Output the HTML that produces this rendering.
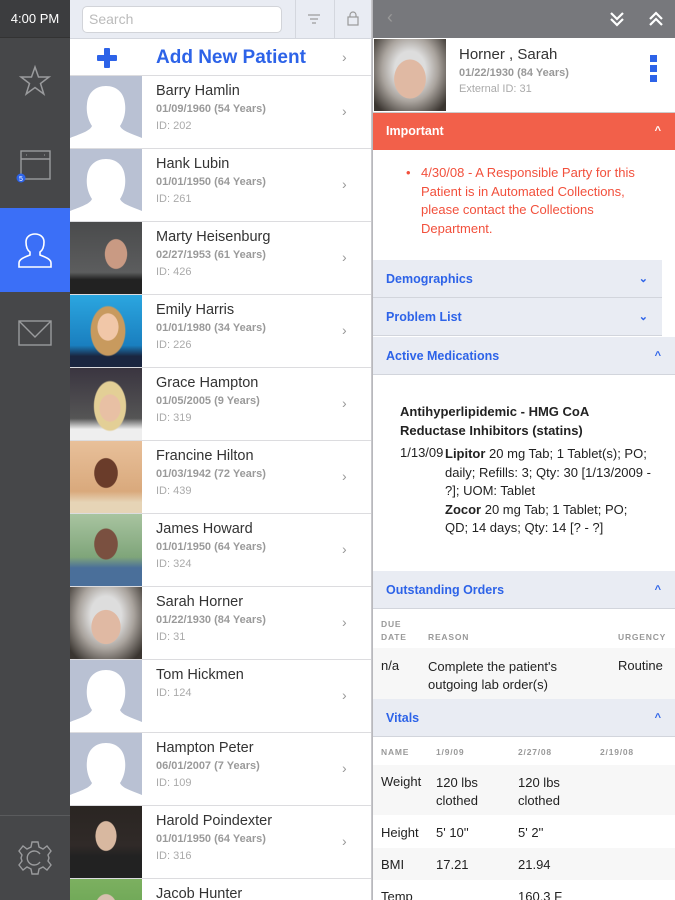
<!DOCTYPE html>
<html><head><meta charset="utf-8"><style>
*{margin:0;padding:0;box-sizing:border-box}
html,body{width:675px;height:900px;overflow:hidden}
body{font-family:"Liberation Sans",sans-serif;background:#fff}
#wrap{position:relative;width:675px;height:900px;overflow:hidden}
.abs{position:absolute}
#side{left:0;top:0;width:70px;height:900px;background:#464749}
#time{left:0;top:0;width:70px;height:38px;background:#3c3d3f;color:#fff;font-size:13px;line-height:38px;text-align:center;border-bottom:1px solid #333}
#list{left:70px;top:0;width:302px;height:900px;background:#fff;border-right:1px solid #c8c8cc;overflow:hidden}
#lhead{left:0;top:0;width:302px;height:39px;background:#e9ecf3;border-bottom:1px solid #d4d7de}
.search{left:12px;top:6px;width:200px;height:27px;background:#fff;border:1px solid #d2d4d9;border-radius:5px;color:#bbb;font-size:14px;line-height:25px;padding-left:6px}
.row{position:absolute;left:0;width:302px;height:73px;border-bottom:1px solid #dcdcdf}
.ph{position:absolute;left:0;top:0;width:72px;height:72px;overflow:hidden}
.nm{position:absolute;left:86px;top:7px;font-size:14.5px;color:#333}
.dt{position:absolute;left:86px;top:27px;font-size:11px;font-weight:bold;color:#9a9a9a}
.id{position:absolute;left:86px;top:44px;font-size:11px;color:#aaa}
.chev{position:absolute;left:272px;top:27px;font-size:14px;color:#999}
#right{left:373px;top:0;width:302px;height:900px;overflow:hidden}
#rtop{left:0;top:0;width:302px;height:38px;background:#77787c}
.sec{position:absolute;left:0;width:302px;height:38px;background:#e9ecf3;border-bottom:1px solid #d2d5dc;color:#2d63e8;font-weight:bold;font-size:12.5px;line-height:38px;padding-left:13px}
.sec .c{position:absolute;right:14px;top:0;font-size:11px;color:#2d63e8}
.cell{position:absolute;font-size:13px;color:#222}
.hd{position:absolute;font-size:8.5px;font-weight:bold;color:#999;letter-spacing:.8px}
</style></head><body><div id="wrap">
<div id="side" class="abs">
 <div id="time" class="abs">4:00 PM</div>
 <svg class="abs" style="left:18px;top:64px" width="34" height="34" viewBox="0 0 34 34"><path d="M17 3 L20.5 13 L31 13 L22.5 19.5 L25.8 30 L17 23.5 L8.2 30 L11.5 19.5 L3 13 L13.5 13 Z" fill="none" stroke="#9a9b9d" stroke-width="1.5"/></svg>
 <svg class="abs" style="left:15px;top:148px" width="40" height="36" viewBox="0 0 40 36"><rect x="6" y="3" width="29" height="28" fill="none" stroke="#9a9b9d" stroke-width="1.4"/><line x1="6" y1="11" x2="35" y2="11" stroke="#9a9b9d" stroke-width="1.4"/><line x1="11" y1="7" x2="12" y2="7" stroke="#9a9b9d"/><line x1="29" y1="7" x2="30" y2="7" stroke="#9a9b9d"/><circle cx="6" cy="30" r="4.5" fill="#2d63e8"/><text x="6" y="33" font-size="7" fill="#fff" text-anchor="middle" font-family="Liberation Sans">5</text></svg>
 <div class="abs" style="left:0;top:208px;width:70px;height:84px;background:#3b6ff7"></div>
 <svg class="abs" style="left:16px;top:231px" width="38" height="38" viewBox="0 0 38 38"><path d="M3 36 L3 32 C3 28 9 26 14 24 L14 21 C11 19 10 15 10 11 C10 6 14 3 19 3 C24 3 28 6 28 11 C28 15 27 19 24 21 L24 24 C29 26 35 28 35 32 L35 36 Z" fill="none" stroke="#fff" stroke-width="1.6"/></svg>
 <svg class="abs" style="left:18px;top:320px" width="34" height="26" viewBox="0 0 34 26"><rect x="1" y="1" width="32" height="24" fill="none" stroke="#9a9b9d" stroke-width="1.4"/><path d="M1 1 L17 17 L33 1" fill="none" stroke="#9a9b9d" stroke-width="1.4"/></svg>
 <div class="abs" style="left:0;top:815px;width:70px;height:1px;background:#5a5b5d"></div>
 <svg class="abs" style="left:17px;top:840px" width="36" height="36" viewBox="0 0 36 36"><g fill="none" stroke="#9a9b9d" stroke-width="1.4"><path d="M15 2 L21 2 L22 7 L26 9 L30 6 L34 11 L31 15 L32 18 L31 21 L34 25 L30 30 L26 27 L22 29 L21 34 L15 34 L14 29 L10 27 L6 30 L2 25 L5 21 L4 18 L5 15 L2 11 L6 6 L10 9 L14 7 Z"/><path d="M23 14 A7 7 0 1 0 23 22"/></g></svg>
</div>

<div id="list" class="abs">
 <div id="lhead" class="abs">
  <div class="search abs">Search</div>
  <div class="abs" style="left:225px;top:0;width:1px;height:39px;background:#d4d7de"></div>
  <div class="abs" style="left:264px;top:0;width:1px;height:39px;background:#d4d7de"></div>
  <svg class="abs" style="left:237px;top:13px" width="14" height="12"><g stroke="#999" stroke-width="1.2"><line x1="1" y1="2" x2="13" y2="2"/><line x1="3" y1="6" x2="11" y2="6"/><line x1="5" y1="10" x2="9" y2="10"/></g></svg>
  <svg class="abs" style="left:277px;top:11px" width="12" height="15"><rect x="1" y="6" width="10" height="8" fill="none" stroke="#999" stroke-width="1.2"/><path d="M3 6 V4 A3 3 0 0 1 9 4 V6" fill="none" stroke="#999" stroke-width="1.2"/></svg>
 </div>
 <div class="row" style="top:39px;height:37px">
  <div class="abs" style="left:27px;top:9px;width:20px;height:20px"><div class="abs" style="left:7px;top:0;width:6px;height:20px;background:#2d63e8;border-radius:1px"></div><div class="abs" style="left:0;top:7px;width:20px;height:6px;background:#2d63e8;border-radius:1px"></div></div>
  <div class="abs" style="left:86px;top:8px;font-size:19px;font-weight:bold;color:#2d63e8">Add New Patient</div>
  <div class="chev" style="top:10px">›</div>
 </div>
 <div class="abs" style="left:0;top:76px">
 <div class="row" style="top:0"><div class="ph" style="background:#b9c1d3"><svg width="72" height="72"><path d="M0 72 L0 62 C10 58 20 55 22 50 C18 44 16 36 17 28 C18 16 26 10 36 10 C46 10 54 16 55 28 C56 36 54 44 50 50 C52 55 62 58 72 62 L72 72 Z" fill="#fff"/></svg></div><div class="nm">Barry Hamlin</div><div class="dt">01/09/1960 (54 Years)</div><div class="id">ID: 202</div><div class="chev">›</div></div>
 <div class="row" style="top:73px"><div class="ph" style="background:#b9c1d3"><svg width="72" height="72"><path d="M0 72 L0 62 C10 58 20 55 22 50 C18 44 16 36 17 28 C18 16 26 10 36 10 C46 10 54 16 55 28 C56 36 54 44 50 50 C52 55 62 58 72 62 L72 72 Z" fill="#fff"/></svg></div><div class="nm">Hank Lubin</div><div class="dt">01/01/1950 (64 Years)</div><div class="id">ID: 261</div><div class="chev">›</div></div>
 <div class="row" style="top:146px"><div class="ph" style="background:radial-gradient(ellipse 18px 24px at 46px 32px,#c99a83 60%,transparent 64%),linear-gradient(180deg,#4a4b4c 0,#5c5d5e 70%,#222 80%)"></div><div class="nm">Marty Heisenburg</div><div class="dt">02/27/1953 (61 Years)</div><div class="id">ID: 426</div><div class="chev">›</div></div>
 <div class="row" style="top:219px"><div class="ph" style="background:radial-gradient(ellipse 17px 22px at 38px 32px,#f1c7a8 60%,transparent 64%),radial-gradient(ellipse 28px 40px at 38px 36px,#c89a5e 60%,transparent 64%),linear-gradient(180deg,#2ba6e0,#1a7fbf 70%,#1a2640 85%)"></div><div class="nm">Emily Harris</div><div class="dt">01/01/1980 (34 Years)</div><div class="id">ID: 226</div><div class="chev">›</div></div>
 <div class="row" style="top:292px"><div class="ph" style="background:radial-gradient(ellipse 17px 22px at 40px 40px,#e8c0a4 60%,transparent 64%),radial-gradient(ellipse 26px 40px at 40px 38px,#e3cf96 60%,transparent 64%),linear-gradient(180deg,#3a3540,#555 70%,#eee 85%)"></div><div class="nm">Grace Hampton</div><div class="dt">01/05/2005 (9 Years)</div><div class="id">ID: 319</div><div class="chev">›</div></div>
 <div class="row" style="top:365px"><div class="ph" style="background:radial-gradient(ellipse 19px 24px at 36px 32px,#6a3c2a 60%,transparent 64%),linear-gradient(180deg,#e8c09a,#d9a97c 70%,#e6d4b6 85%)"></div><div class="nm">Francine Hilton</div><div class="dt">01/03/1942 (72 Years)</div><div class="id">ID: 439</div><div class="chev">›</div></div>
 <div class="row" style="top:438px"><div class="ph" style="background:radial-gradient(ellipse 19px 25px at 36px 30px,#7a5040 60%,transparent 64%),linear-gradient(180deg,#a8c4a0,#7fa57a 60%,#4a6f9a 75%)"></div><div class="nm">James Howard</div><div class="dt">01/01/1950 (64 Years)</div><div class="id">ID: 324</div><div class="chev">›</div></div>
 <div class="row" style="top:511px"><div class="ph" style="background:radial-gradient(ellipse 24px 28px at 36px 40px,#e0b9a3 60%,transparent 62%),radial-gradient(ellipse at 36px 28px,#ddd 30%,#a9a39d 55%,#3a3530 90%)"></div><div class="nm">Sarah Horner</div><div class="dt">01/22/1930 (84 Years)</div><div class="id">ID: 31</div><div class="chev">›</div></div>
 <div class="row" style="top:584px"><div class="ph" style="background:#b9c1d3"><svg width="72" height="72"><path d="M0 72 L0 62 C10 58 20 55 22 50 C18 44 16 36 17 28 C18 16 26 10 36 10 C46 10 54 16 55 28 C56 36 54 44 50 50 C52 55 62 58 72 62 L72 72 Z" fill="#fff"/></svg></div><div class="nm">Tom Hickmen</div><div class="dt" style="font-weight:normal;color:#aaa">ID: 124</div><div class="chev">›</div></div>
 <div class="row" style="top:657px"><div class="ph" style="background:#b9c1d3"><svg width="72" height="72"><path d="M0 72 L0 62 C10 58 20 55 22 50 C18 44 16 36 17 28 C18 16 26 10 36 10 C46 10 54 16 55 28 C56 36 54 44 50 50 C52 55 62 58 72 62 L72 72 Z" fill="#fff"/></svg></div><div class="nm">Hampton Peter</div><div class="dt">06/01/2007 (7 Years)</div><div class="id">ID: 109</div><div class="chev">›</div></div>
 <div class="row" style="top:730px"><div class="ph" style="background:radial-gradient(ellipse 17px 24px at 36px 30px,#d8b8a0 60%,transparent 64%),linear-gradient(180deg,#2a2522,#302a28 55%,#222 70%)"></div><div class="nm">Harold Poindexter</div><div class="dt">01/01/1950 (64 Years)</div><div class="id">ID: 316</div><div class="chev">›</div></div>
 <div class="row" style="top:803px"><div class="ph" style="background:radial-gradient(ellipse 18px 24px at 36px 30px,#d8c0b0 60%,transparent 64%),linear-gradient(180deg,#7cb060,#5a9a48)"></div><div class="nm">Jacob Hunter</div></div>
 </div>
</div>

<div id="right" class="abs">
 <div id="rtop" class="abs">
  <div class="abs" style="left:14px;top:7px;color:#999;font-size:18px">‹</div>
  <svg class="abs" style="left:236px;top:11px" width="16" height="16"><path d="M2 2 L8 8 L14 2 M2 8 L8 14 L14 8" fill="none" stroke="#fff" stroke-width="2.2"/></svg>
  <svg class="abs" style="left:275px;top:11px" width="16" height="16"><path d="M2 8 L8 2 L14 8 M2 14 L8 8 L14 14" fill="none" stroke="#fff" stroke-width="2.2"/></svg>
 </div>
 <div class="abs" style="left:0;top:38px;width:302px;height:75px;border-bottom:1px solid #ccc;background:#fff">
  <div class="abs" style="left:1px;top:1px;width:72px;height:72px;background:radial-gradient(ellipse 26px 32px at 36px 40px,#e0b9a3 60%,transparent 62%),radial-gradient(ellipse at 36px 30px,#ddd 30%,#a9a39d 55%,#3a3530 90%)"></div>
  <div class="abs" style="left:86px;top:8px;font-size:15px;color:#333">Horner , Sarah</div>
  <div class="abs" style="left:86px;top:29px;font-size:11px;font-weight:bold;color:#999">01/22/1930 (84 Years)</div>
  <div class="abs" style="left:86px;top:45px;font-size:11px;color:#aaa">External ID: 31</div>
  <div class="abs" style="left:277px;top:17px;width:7px;height:7px;background:#2d63e8"></div>
  <div class="abs" style="left:277px;top:27px;width:7px;height:7px;background:#2d63e8"></div>
  <div class="abs" style="left:277px;top:37px;width:7px;height:7px;background:#2d63e8"></div>
 </div>
 <div class="abs" style="left:0;top:113px;width:302px;height:37px;background:#f2604a;color:#fff;font-weight:bold;font-size:12.5px;line-height:37px;padding-left:13px">Important<span class="abs" style="right:14px;font-size:11px">^</span></div>
 <div class="abs" style="left:48px;top:164px;width:240px;font-size:13px;line-height:18.5px;color:#f2503c">
  <span class="abs" style="left:-15px;top:0">•</span>4/30/08 - A Responsible Party for this Patient is in Automated Collections, please contact the Collections Department.</div>
 <div class="sec" style="top:260px;width:289px">Demographics<span class="c">⌄</span></div>
 <div class="sec" style="top:298px;width:289px">Problem List<span class="c">⌄</span></div>
 <div class="sec" style="top:337px">Active Medications<span class="c">^</span></div>
 <div class="abs" style="left:27px;top:403px;font-size:13px;font-weight:bold;color:#222;line-height:18.5px">Antihyperlipidemic - HMG CoA<br>Reductase Inhibitors (statins)</div>
 <div class="cell" style="left:27px;top:445px">1/13/09</div>
 <div class="cell" style="left:72px;top:445px;width:206px;line-height:18.5px"><b>Lipitor</b> 20 mg Tab; 1 Tablet(s); PO; daily; Refills: 3; Qty: 30 [1/13/2009 - ?]; UOM: Tablet<br><b>Zocor</b> 20 mg Tab; 1 Tablet; PO; QD; 14 days; Qty: 14 [? - ?]</div>
 <div class="sec" style="top:571px">Outstanding Orders<span class="c">^</span></div>
 <div class="hd" style="left:8px;top:619px">DUE</div>
 <div class="hd" style="left:8px;top:632px">DATE</div>
 <div class="hd" style="left:55px;top:632px">REASON</div>
 <div class="hd" style="left:245px;top:632px">URGENCY</div>
 <div class="abs" style="left:0;top:648px;width:302px;height:51px;background:#f7f7f7"></div>
 <div class="cell" style="left:8px;top:658px">n/a</div>
 <div class="cell" style="left:55px;top:658px;line-height:18px">Complete the patient's<br>outgoing lab order(s)</div>
 <div class="cell" style="left:245px;top:658px">Routine</div>
 <div class="sec" style="top:699px">Vitals<span class="c">^</span></div>
 <div class="hd" style="left:8px;top:747px">NAME</div>
 <div class="hd" style="left:63px;top:747px">1/9/09</div>
 <div class="hd" style="left:145px;top:747px">2/27/08</div>
 <div class="hd" style="left:227px;top:747px">2/19/08</div>
 <div class="abs" style="left:0;top:765px;width:302px;height:50px;background:#f7f7f7"></div>
 <div class="abs" style="left:0;top:848px;width:302px;height:32px;background:#f7f7f7"></div>
 <div class="cell" style="left:8px;top:774px">Weight</div>
 <div class="cell" style="left:63px;top:774px;line-height:18px">120 lbs<br>clothed</div>
 <div class="cell" style="left:145px;top:774px;line-height:18px">120 lbs<br>clothed</div>
 <div class="cell" style="left:8px;top:825px">Height</div>
 <div class="cell" style="left:63px;top:825px">5' 10''</div>
 <div class="cell" style="left:145px;top:825px">5' 2''</div>
 <div class="cell" style="left:8px;top:857px">BMI</div>
 <div class="cell" style="left:63px;top:857px">17.21</div>
 <div class="cell" style="left:145px;top:857px">21.94</div>
 <div class="cell" style="left:8px;top:889px">Temp</div>
 <div class="cell" style="left:145px;top:889px">160.3 F</div>
</div>
<div class="abs" style="left:372px;top:0;width:1px;height:900px;background:#b8b8bc"></div>
</div></body></html>
